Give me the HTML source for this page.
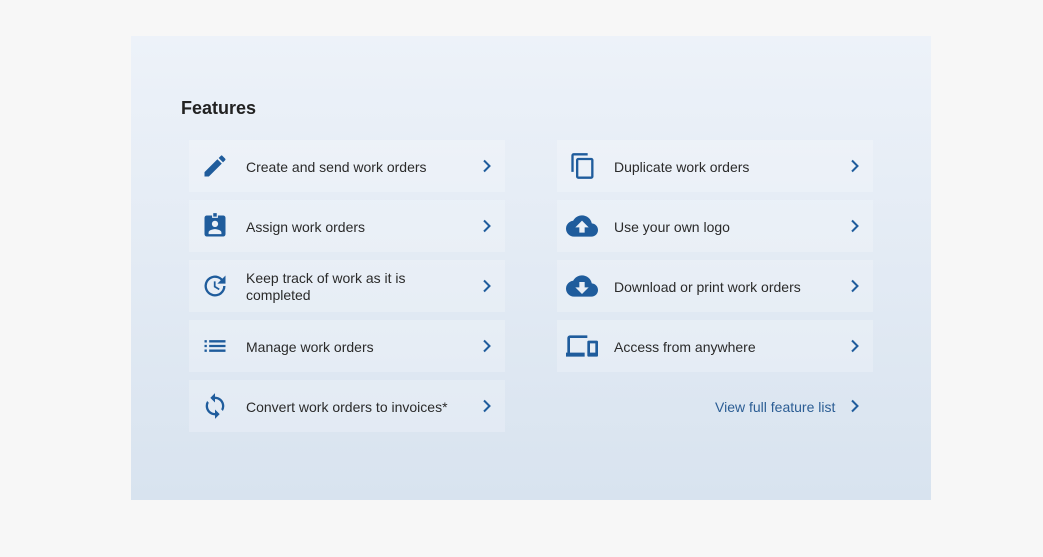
<!DOCTYPE html>
<html><head><style>
body{margin:0;width:1043px;height:557px;background:#f7f7f7;font-family:"Liberation Sans",sans-serif;position:relative;overflow:hidden}
.sec{position:absolute;left:131px;top:36px;width:800px;height:464px;background:linear-gradient(#edf2f9,#d8e3ef)}
h2{position:absolute;left:181px;top:98px;margin:0;font-size:18px;font-weight:bold;color:#222}
.c{position:absolute;width:316px;height:52px;background:rgba(255,255,255,0.22);display:flex;align-items:center;font-size:14px;color:#2a2a2a;line-height:17px}
.c svg.i{position:absolute;left:12px;top:12px;width:28px;height:28px;fill:#1f5c9c}
.c span{position:absolute;left:57px;width:200px;top:auto;margin-top:2px}
.c .ch{position:absolute;left:293px;top:19px;width:10px;height:14px}
.l{left:189px}.r{left:557px}
</style></head><body>
<div class="sec"></div>
<h2>Features</h2>
<svg width="0" height="0" style="position:absolute"><defs><symbol id="ch" viewBox="0 0 10 14"><path d="M2 1.5l5.5 5.5L2 12.5" fill="none" stroke="#1f5c9c" stroke-width="2"/></symbol></defs></svg>

<div class="c l" style="top:140px"><svg class="i" viewBox="0 0 24 24"><path d="M3 17.25V21h3.75L17.81 9.94l-3.75-3.75L3 17.25zM20.71 7.04a1 1 0 0 0 0-1.41l-2.34-2.34a1 1 0 0 0-1.41 0l-1.83 1.83 3.75 3.75 1.83-1.83z"/></svg><span>Create and send work orders</span><svg class="ch"><use href="#ch"/></svg></div>
<div class="c l" style="top:200px"><svg class="i" viewBox="0 0 24 24"><path d="M19 3h-4.5v2h-5V3H5a2 2 0 0 0-2 2v14a2 2 0 0 0 2 2h14a2 2 0 0 0 2-2V5a2 2 0 0 0-2-2zM12 7.5a2.7 2.7 0 1 1 0 5.4 2.7 2.7 0 0 1 0-5.4zM17.5 19h-11v-1.5c0-1.8 3.7-2.8 5.5-2.8s5.5 1 5.5 2.8V19zM10.5 1h3v3h-3z"/></svg><span>Assign work orders</span><svg class="ch"><use href="#ch"/></svg></div>
<div class="c l" style="top:260px"><svg class="i" viewBox="0 0 24 24"><path d="M11 8v5l4.25 2.52.77-1.28-3.52-2.09V8H11zm10 2V3l-2.64 2.64A9 9 0 1 0 21 12h-2a7 7 0 1 1-2.05-4.95L14 10h7z"/></svg><span>Keep track of work as it is completed</span><svg class="ch"><use href="#ch"/></svg></div>
<div class="c l" style="top:320px"><svg class="i" viewBox="0 0 24 24"><path d="M3 13h2v-2H3v2zm0 4h2v-2H3v2zm0-8h2V7H3v2zm4 4h14v-2H7v2zm0 4h14v-2H7v2zM7 7v2h14V7H7z"/></svg><span>Manage work orders</span><svg class="ch"><use href="#ch"/></svg></div>
<div class="c l" style="top:380px"><svg class="i" viewBox="0 0 24 24"><path d="M12 4V1L8 5l4 4V6c3.31 0 6 2.69 6 6 0 1.01-.25 1.970-.7 2.8l1.46 1.46A7.930 7.930 0 0 0 20 12c0-4.420-3.580-8-8-8zm0 14c-3.31 0-6-2.69-6-6 0-1.01.25-1.97.7-2.8L5.24 7.74A7.930 7.930 0 0 0 4 12c0 4.420 3.580 8 8 8v3l4-4-4-4v3z"/></svg><span style="width:230px">Convert work orders to invoices*</span><svg class="ch"><use href="#ch"/></svg></div>

<div class="c r" style="top:140px"><svg class="i" viewBox="0 0 24 24"><path d="M16 1H4a2 2 0 0 0-2 2v14h2V3h12V1zm3 4H8a2 2 0 0 0-2 2v14a2 2 0 0 0 2 2h11a2 2 0 0 0 2-2V7a2 2 0 0 0-2-2zm0 16H8V7h11v14z"/></svg><span>Duplicate work orders</span><svg class="ch"><use href="#ch"/></svg></div>
<div class="c r" style="top:200px"><svg class="i" style="left:9px;width:32px;height:32px;top:10px" viewBox="0 0 24 24"><path d="M19.35 10.04A7.49 7.49 0 0 0 12 4C9.11 4 6.6 5.64 5.35 8.04A6 6 0 0 0 0 14c0 3.31 2.69 6 6 6h13c2.76 0 5-2.24 5-5 0-2.64-2.05-4.78-4.65-4.96zM14 13v4h-4v-4H7l5-5 5 5h-3z"/></svg><span>Use your own logo</span><svg class="ch"><use href="#ch"/></svg></div>
<div class="c r" style="top:260px"><svg class="i" style="left:9px;width:32px;height:32px;top:10px" viewBox="0 0 24 24"><path d="M19.35 10.04A7.49 7.49 0 0 0 12 4C9.11 4 6.6 5.64 5.35 8.04A6 6 0 0 0 0 14c0 3.31 2.69 6 6 6h13c2.76 0 5-2.24 5-5 0-2.64-2.05-4.78-4.65-4.96zM17 13l-5 5-5-5h3V9h4v4h3z"/></svg><span>Download or print work orders</span><svg class="ch"><use href="#ch"/></svg></div>
<div class="c r" style="top:320px"><svg class="i" style="left:9px;width:32px;height:32px;top:10px" viewBox="0 0 24 24"><path d="M3 6h13V4H3a2 2 0 0 0-2 2v11H0v3h14v-3H3V6zm20 2h-6a1 1 0 0 0-1 1v10a1 1 0 0 0 1 1h6a1 1 0 0 0 1-1V9a1 1 0 0 0-1-1zm-1 9h-4v-7h4v7z"/></svg><span>Access from anywhere</span><svg class="ch"><use href="#ch"/></svg></div>
<div style="position:absolute;left:715px;top:399px;font-size:14px;color:#2b5d94">View full feature list</div>
<svg style="position:absolute;left:850px;top:399px;width:10px;height:14px"><use href="#ch"/></svg>
</body></html>
